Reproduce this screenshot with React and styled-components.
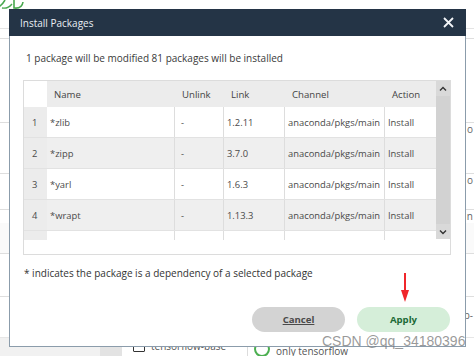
import React from 'react'
import styled, { createGlobalStyle } from 'styled-components'

const GlobalStyle = createGlobalStyle`
  html, body {
    margin: 0;
    padding: 0;
    background: #fff;
  }
  body {
    font-family: "Open Sans", "DejaVu Sans", sans-serif;
    color: #333;
  }
`

const Page = styled.div`
  position: relative;
  width: 474px;
  height: 356px;
  overflow: hidden;
  background: #fff;
`

/* ---- what sits behind the modal ---- */

const Backdrop = styled.div`
  display: flex;
  flex-direction: column;
  height: 100%;
`

const LogoBar = styled.div`
  height: 28px;
  display: flex;
  align-items: flex-start;
  border-bottom: 1px solid #e4e4e4;
`

const BgRow = styled.div`
  height: ${p => p.h}px;
  border-bottom: 1px solid ${p => (p.line ? '#dedede' : 'transparent')};
  background: ${p => p.bg || '#fff'};
  display: flex;
  align-items: center;
  justify-content: flex-end;
  font-size: 10px;
  color: #666;
  padding-right: 1px;
`

const BottomRow = styled.div`
  margin-top: auto;
  height: 18px;
  display: grid;
  grid-template-columns: 100px 22px 126px 1fr;
  border-top: 1px solid #e6e6e6;
`

const BottomCell = styled.div`
  background: ${p => p.bg || '#fff'};
  border-right: ${p => (p.divider ? '1px solid #dcdcdc' : 'none')};
  display: flex;
  align-items: flex-start;
  gap: 6px;
  padding-left: ${p => p.pad || 0}px;
  font-size: 10px;
  color: #555;
  line-height: 1;
`

const BgCheck = styled.span`
  width: 10px;
  height: 11px;
  border: 1.5px solid #333;
  border-radius: 1px;
  flex: none;
  margin-top: 1px;
`

const BgRadio = styled.span`
  width: 12px;
  height: 12px;
  border: 2px solid #4caf50;
  border-radius: 50%;
  flex: none;
  margin-top: 3px;
`

const BgText = styled.span`
  padding-top: ${p => p.top || 0}px;
`

/* ---- the modal ---- */

const Dialog = styled.div`
  position: absolute;
  top: 9px;
  left: 9px;
  width: 455px;
  height: 337px;
  background: #fff;
  border: 1px solid #8b9cab;
  border-top: none;
  display: flex;
  flex-direction: column;
`

const Header = styled.div`
  height: 27px;
  background: #243446;
  display: flex;
  align-items: center;
  justify-content: space-between;
  padding: 0 12px 0 11px;
  margin: 0 -1px;
`

const Title = styled.div`
  color: #e9eef3;
  font-size: 10px;
`

const Body = styled.div`
  flex: 1;
  display: flex;
  flex-direction: column;
  padding: 0 14px 0 13px;
`

const Message = styled.div`
  font-size: 10px;
  color: #3a3a3a;
  margin-top: 15px;
  padding-left: 3px;
  height: 15px;
  line-height: 15px;
`

const Table = styled.div`
  margin-top: 14px;
  height: 173px;
  border: 1px solid #dcdcdc;
  display: flex;
  align-items: flex-start;
`

const TableMain = styled.div`
  flex: 1;
  display: flex;
  flex-direction: column;
`

const Row = styled.div`
  display: grid;
  grid-template-columns: 23px 128px 49px 61px 100px 1fr;
  height: ${p => p.h}px;
  border-bottom: ${p => (p.line ? '1px solid #e2e2e2' : 'none')};
  box-sizing: border-box;
`

const HeadCell = styled.div`
  background: ${p => (p.blank ? '#fff' : '#ececec')};
  display: flex;
  align-items: center;
  padding-left: 7px;
  font-size: 9.6px;
  color: #444;
`

const Cell = styled.div`
  background: ${p => (p.index ? '#ececec' : p.shade ? '#efefef' : '#fff')};
  border-right: ${p => (p.index || p.last ? 'none' : '1px solid #dddddd')};
  display: flex;
  align-items: center;
  padding-left: ${p => (p.index ? 8 : p.dash ? 6 : 3)}px;
  font-size: 9.4px;
  color: #4a4a4a;
  white-space: nowrap;
  overflow: hidden;
`

const Scrollbar = styled.div`
  width: 14px;
  height: 158px;
  background: #d2d2d2;
  display: flex;
  flex-direction: column;
  justify-content: space-between;
`

const ScrollButton = styled.div`
  height: 15px;
  background: #d9d9d9;
  display: flex;
  align-items: center;
  justify-content: center;
`

const Footnote = styled.div`
  margin-top: 11px;
  font-size: 10px;
  color: #333;
  padding-left: 1px;
  height: 15px;
  line-height: 15px;
`

const Actions = styled.div`
  margin-top: auto;
  margin-bottom: 14px;
  display: flex;
  justify-content: flex-end;
  gap: 12px;
  padding-right: 1px;
`

const Button = styled.button`
  width: 93px;
  height: 25px;
  border: none;
  border-radius: 13px;
  background: ${p => (p.primary ? '#d5eed9' : '#d3d3d3')};
  color: ${p => (p.primary ? '#1d6b37' : '#4a4a4a')};
  font-family: "Open Sans", "DejaVu Sans", sans-serif;
  font-size: 9.6px;
  font-weight: 700;
  text-decoration: ${p => (p.primary ? 'none' : 'underline')};
  padding: 0;
  cursor: pointer;
`

const Arrow = styled.svg`
  position: absolute;
  left: 400px;
  top: 273px;
`

const Watermark = styled.div`
  position: absolute;
  left: 322px;
  top: 333px;
  font-family: "Liberation Sans", Arial, sans-serif;
  font-size: 14px;
  color: rgba(120, 120, 120, 0.75);
  white-space: nowrap;
`

const packages = [
  { name: '*zlib', link: '1.2.11' },
  { name: '*zipp', link: '3.7.0' },
  { name: '*yarl', link: '1.6.3' },
  { name: '*wrapt', link: '1.13.3' },
]

const Chevron = ({ up }) => (
  <svg width="8" height="6" viewBox="0 0 8 6">
    <path
      d={up ? 'M1 4.5 L4 1.5 L7 4.5' : 'M1 1.5 L4 4.5 L7 1.5'}
      fill="none"
      stroke="#333"
      strokeWidth="1.4"
    />
  </svg>
)

const Close = () => (
  <svg width="11" height="11" viewBox="0 0 11 11">
    <path d="M1 1 L10 10 M10 1 L1 10" stroke="#f2f5f8" strokeWidth="1.8" />
  </svg>
)

export default function App() {
  return (
    <Page>
      <GlobalStyle />
      <Backdrop>
        <LogoBar>
          <svg width="30" height="10" viewBox="0 0 30 10">
            <path d="M-8 8 Q0 9 5 0" fill="none" stroke="#49a84f" strokeWidth="1.6" />
            <path d="M14 -2 L14 8 Q22 9 23 2" fill="none" stroke="#49a84f" strokeWidth="1.6" />
            <path d="M2 8 Q8 9 12 4" fill="none" stroke="#49a84f" strokeWidth="1.4" />
          </svg>
        </LogoBar>
        <BgRow h={9} line />
        <BgRow h={83} line />
        <BgRow h={12}>o</BgRow>
        <BgRow h={37} line />
        <BgRow h={12}>o</BgRow>
        <BgRow h={22} line />
        <BgRow h={12}>n</BgRow>
        <BgRow h={30} line bg="#fafafa" />
        <BgRow h={42} line />
        <BgRow h={36}>b-</BgRow>
        <BottomRow>
          <BottomCell bg="#f1f1f1" />
          <BottomCell bg="#e3e3e3" />
          <BottomCell divider pad={11}>
            <BgCheck />
            <BgText top={3}>tensorflow-base</BgText>
          </BottomCell>
          <BottomCell pad={6}>
            <BgRadio />
            <BgText top={8}>only tensorflow</BgText>
          </BottomCell>
        </BottomRow>
      </Backdrop>

      <Dialog>
        <Header>
          <Title>Install Packages</Title>
          <Close />
        </Header>
        <Body>
          <Message>1 package will be modified 81 packages will be installed</Message>
          <Table>
            <TableMain>
              <Row h={26}>
                <HeadCell blank />
                <HeadCell>Name</HeadCell>
                <HeadCell>Unlink</HeadCell>
                <HeadCell>Link</HeadCell>
                <HeadCell>Channel</HeadCell>
                <HeadCell>Action</HeadCell>
              </Row>
              {packages.map((p, i) => (
                <Row key={p.name} h={31} line>
                  <Cell index>{i + 1}</Cell>
                  <Cell shade={i % 2 === 1}>{p.name}</Cell>
                  <Cell shade={i % 2 === 1} dash>-</Cell>
                  <Cell shade={i % 2 === 1}>{p.link}</Cell>
                  <Cell shade={i % 2 === 1}>anaconda/pkgs/main</Cell>
                  <Cell shade={i % 2 === 1} last>Install</Cell>
                </Row>
              ))}
              <Row h={9}>
                <Cell index />
                <Cell />
                <Cell />
                <Cell />
                <Cell />
                <Cell last />
              </Row>
            </TableMain>
            <Scrollbar>
              <ScrollButton>
                <Chevron up />
              </ScrollButton>
              <ScrollButton>
                <Chevron />
              </ScrollButton>
            </Scrollbar>
          </Table>
          <Footnote>* indicates the package is a dependency of a selected package</Footnote>
          <Actions>
            <Button>Cancel</Button>
            <Button primary>Apply</Button>
          </Actions>
        </Body>
      </Dialog>

      <Arrow width="10" height="30" viewBox="0 0 10 30">
        <path d="M5 0 L5 20" stroke="#f0262b" strokeWidth="2" />
        <path d="M1 17 L9 17 L5 29 Z" fill="#f0262b" />
      </Arrow>

      <Watermark>CSDN @qq_34180396</Watermark>
    </Page>
  )
}
